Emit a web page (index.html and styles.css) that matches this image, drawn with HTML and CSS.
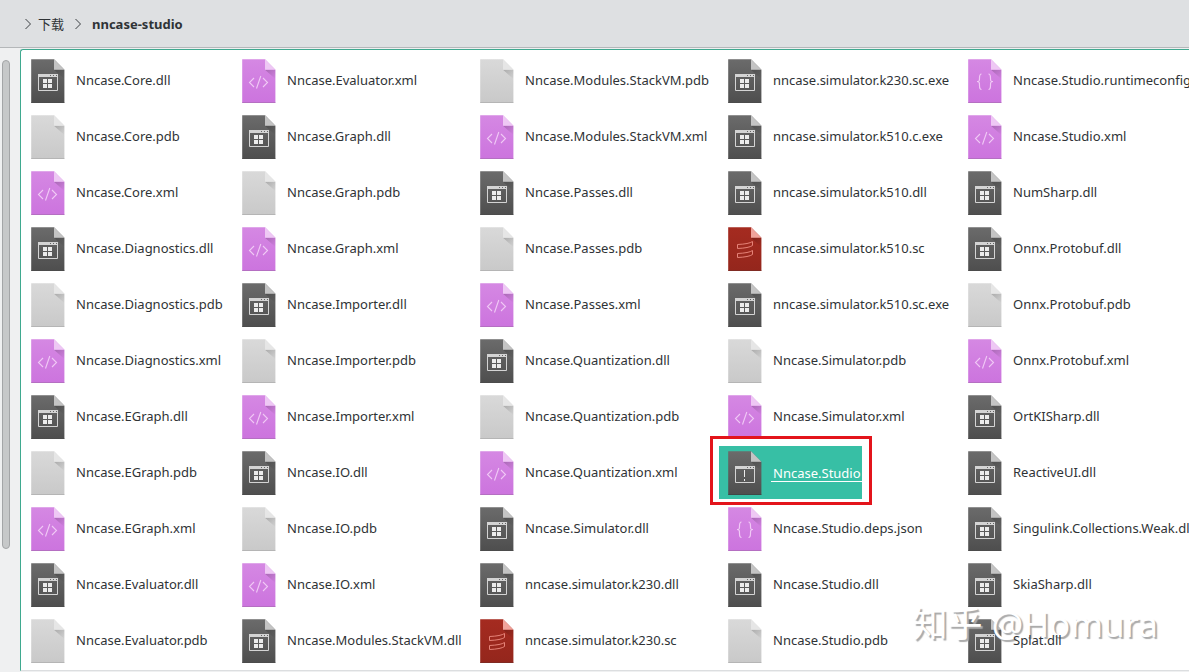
FILE: index.html
```html
<!DOCTYPE html>
<html lang="zh-CN">
<head>
<meta charset="utf-8">
<title>nncase-studio</title>
<link rel="stylesheet" href="styles.css">
</head>
<body>
<svg class="defs" aria-hidden="true">
  <defs>
    <linearGradient id="g-dark" x1="0" y1="0" x2="0" y2="1"><stop offset="0" stop-color="#6b6b6b"/><stop offset="1" stop-color="#4e4e4e"/></linearGradient>
    <linearGradient id="g-grey" x1="0" y1="0" x2="0" y2="1"><stop offset="0" stop-color="#d9d9d9"/><stop offset="1" stop-color="#c9c9c9"/></linearGradient>
    <linearGradient id="g-pink" x1="0" y1="0" x2="0" y2="1"><stop offset="0" stop-color="#d588e3"/><stop offset="1" stop-color="#cc74de"/></linearGradient>
    <linearGradient id="g-red" x1="0" y1="0" x2="0" y2="1"><stop offset="0" stop-color="#a52b20"/><stop offset="1" stop-color="#94261c"/></linearGradient>
    <linearGradient id="g-fold" x1="0" y1="0" x2="1" y2="1"><stop offset="0" stop-color="#000" stop-opacity=".2"/><stop offset="1" stop-color="#000" stop-opacity="0"/></linearGradient>
  </defs>
  <symbol id="window" viewBox="0 0 34 44">
    <path d="M.2 .3H23L33.4 10.800V43.700H.2Z" fill="url(#g-dark)"/><path d="M.2 43H33.400V43.700H.2Z" fill="#3d3d3d"/>
    <path d="M23 10.800H33.400V20Z" fill="url(#g-fold)"/><path d="M23 .3L33.4 10.800H23Z" fill="#c4c4c4"/>
    <path d="M7.500 15.500H26.500V31.500H7.500Z" fill="none" stroke="#d4d4d4"/><path d="M7 15H27V18H7Z" fill="#d4d4d4"/>
    <path d="M19 16h1v1h-1zM22 16h1v1h-1zM25 16h1v1h-1z" fill="#666"/>
  </symbol>
  <symbol id="dll" viewBox="0 0 34 44">
    <use href="#window"/><path d="M12 20h4v4h-4zM17 20h4v4h-4zM12 25h4v4h-4zM17 25h4v4h-4z" fill="#ececec"/>
  </symbol>
  <symbol id="exec" viewBox="0 0 34 44">
    <use href="#window"/><path d="M16 19h1v7h-1zM16 28h1v2h-1z" fill="#ececec"/>
  </symbol>
  <symbol id="pdb" viewBox="0 0 34 44">
    <path d="M.2 .3H23L33.4 10.800V43.700H.2Z" fill="url(#g-grey)"/><path d="M.2 43H33.400V43.700H.2Z" fill="#aaa"/>
    <path d="M23 10.800H33.400V20Z" fill="url(#g-fold)"/><path d="M23 .3L33.4 10.800H23Z" fill="#e6e6e6"/>
  </symbol>
  <symbol id="pink" viewBox="0 0 34 44">
    <path d="M.2 .3H23L33.4 10.800V43.700H.2Z" fill="url(#g-pink)"/><path d="M.2 43H33.400V43.700H.2Z" fill="#a962b6"/>
    <path d="M23 10.800H33.400V20Z" fill="url(#g-fold)"/><path d="M23 .3L33.4 10.800H23Z" fill="#eec8f4"/>
  </symbol>
  <symbol id="xml" viewBox="0 0 34 44">
    <use href="#pink"/><path d="M12 19L7.500 23.500L12 28M21 19L25.500 23.500L21 28M18.800 17L14.500 29.500" fill="none" stroke="#f0c9f5" stroke-width="1.1"/>
  </symbol>
  <symbol id="json" viewBox="0 0 34 44">
    <use href="#pink"/><path d="M13.500 15C11.500 15 11.500 16.500 11.500 19C11.500 21.500 11.500 22.500 9 22.500C11.500 22.500 11.500 24 11.500 26.500C11.500 29 11.500 30.500 13.500 30.500M20.500 15C22.500 15 22.500 16.500 22.500 19C22.500 21.500 22.500 22.500 25 22.500C22.500 22.500 22.500 24 22.500 26.500C22.500 29 22.500 30.500 20.500 30.500" fill="none" stroke="#f0c9f5" stroke-width="1.2"/>
  </symbol>
  <symbol id="sc" viewBox="0 0 34 44">
    <path d="M.2 .3H23L33.4 10.800V43.700H.2Z" fill="url(#g-red)"/><path d="M.2 43H33.400V43.700H.2Z" fill="#701b13"/>
    <path d="M23 10.800H33.400V20Z" fill="url(#g-fold)"/><path d="M23 .3L33.4 10.800H23Z" fill="#f0a39b"/>
    <path d="M9.500 17.500Q21 17 24.500 14.500V18.500Q21 21 9.500 21.500ZM9.500 26.500Q21 26 24.500 23.500V27.500Q21 30 9.500 30.500Z" fill="none" stroke="#e58378"/>
  </symbol>
</svg>

<header class="pathbar">
  <nav class="crumbs" aria-label="路径">
    <svg class="chevron" viewBox="0 0 8 12" aria-hidden="true"><path d="M1.500 1L6.500 6L1.500 11"/></svg>
    <a href="#downloads">下载</a>
    <svg class="chevron" viewBox="0 0 8 12" aria-hidden="true"><path d="M1.500 1L6.500 6L1.500 11"/></svg>
    <a class="current" href="#nncase-studio" aria-current="page">nncase-studio</a>
  </nav>
</header>

<div class="workspace">
  <div class="gutter"><div class="scroll-thumb"></div></div>
  <main class="files">
    <ul class="column">
      <li><a href="#f"><svg><use href="#dll"/></svg><span>Nncase.Core.dll</span></a></li>
      <li><a href="#f"><svg><use href="#pdb"/></svg><span>Nncase.Core.pdb</span></a></li>
      <li><a href="#f"><svg><use href="#xml"/></svg><span>Nncase.Core.xml</span></a></li>
      <li><a href="#f"><svg><use href="#dll"/></svg><span>Nncase.Diagnostics.dll</span></a></li>
      <li><a href="#f"><svg><use href="#pdb"/></svg><span>Nncase.Diagnostics.pdb</span></a></li>
      <li><a href="#f"><svg><use href="#xml"/></svg><span>Nncase.Diagnostics.xml</span></a></li>
      <li><a href="#f"><svg><use href="#dll"/></svg><span>Nncase.EGraph.dll</span></a></li>
      <li><a href="#f"><svg><use href="#pdb"/></svg><span>Nncase.EGraph.pdb</span></a></li>
      <li><a href="#f"><svg><use href="#xml"/></svg><span>Nncase.EGraph.xml</span></a></li>
      <li><a href="#f"><svg><use href="#dll"/></svg><span>Nncase.Evaluator.dll</span></a></li>
      <li><a href="#f"><svg><use href="#pdb"/></svg><span>Nncase.Evaluator.pdb</span></a></li>
    </ul>
    <ul class="column">
      <li><a href="#f"><svg><use href="#xml"/></svg><span>Nncase.Evaluator.xml</span></a></li>
      <li><a href="#f"><svg><use href="#dll"/></svg><span>Nncase.Graph.dll</span></a></li>
      <li><a href="#f"><svg><use href="#pdb"/></svg><span>Nncase.Graph.pdb</span></a></li>
      <li><a href="#f"><svg><use href="#xml"/></svg><span>Nncase.Graph.xml</span></a></li>
      <li><a href="#f"><svg><use href="#dll"/></svg><span>Nncase.Importer.dll</span></a></li>
      <li><a href="#f"><svg><use href="#pdb"/></svg><span>Nncase.Importer.pdb</span></a></li>
      <li><a href="#f"><svg><use href="#xml"/></svg><span>Nncase.Importer.xml</span></a></li>
      <li><a href="#f"><svg><use href="#dll"/></svg><span>Nncase.IO.dll</span></a></li>
      <li><a href="#f"><svg><use href="#pdb"/></svg><span>Nncase.IO.pdb</span></a></li>
      <li><a href="#f"><svg><use href="#xml"/></svg><span>Nncase.IO.xml</span></a></li>
      <li><a href="#f"><svg><use href="#dll"/></svg><span>Nncase.Modules.StackVM.dll</span></a></li>
    </ul>
    <ul class="column">
      <li><a href="#f"><svg><use href="#pdb"/></svg><span>Nncase.Modules.StackVM.pdb</span></a></li>
      <li><a href="#f"><svg><use href="#xml"/></svg><span>Nncase.Modules.StackVM.xml</span></a></li>
      <li><a href="#f"><svg><use href="#dll"/></svg><span>Nncase.Passes.dll</span></a></li>
      <li><a href="#f"><svg><use href="#pdb"/></svg><span>Nncase.Passes.pdb</span></a></li>
      <li><a href="#f"><svg><use href="#xml"/></svg><span>Nncase.Passes.xml</span></a></li>
      <li><a href="#f"><svg><use href="#dll"/></svg><span>Nncase.Quantization.dll</span></a></li>
      <li><a href="#f"><svg><use href="#pdb"/></svg><span>Nncase.Quantization.pdb</span></a></li>
      <li><a href="#f"><svg><use href="#xml"/></svg><span>Nncase.Quantization.xml</span></a></li>
      <li><a href="#f"><svg><use href="#dll"/></svg><span>Nncase.Simulator.dll</span></a></li>
      <li><a href="#f"><svg><use href="#dll"/></svg><span>nncase.simulator.k230.dll</span></a></li>
      <li><a href="#f"><svg><use href="#sc"/></svg><span>nncase.simulator.k230.sc</span></a></li>
    </ul>
    <ul class="column">
      <li><a href="#f"><svg><use href="#dll"/></svg><span>nncase.simulator.k230.sc.exe</span></a></li>
      <li><a href="#f"><svg><use href="#dll"/></svg><span>nncase.simulator.k510.c.exe</span></a></li>
      <li><a href="#f"><svg><use href="#dll"/></svg><span>nncase.simulator.k510.dll</span></a></li>
      <li><a href="#f"><svg><use href="#sc"/></svg><span>nncase.simulator.k510.sc</span></a></li>
      <li><a href="#f"><svg><use href="#dll"/></svg><span>nncase.simulator.k510.sc.exe</span></a></li>
      <li><a href="#f"><svg><use href="#pdb"/></svg><span>Nncase.Simulator.pdb</span></a></li>
      <li><a href="#f"><svg><use href="#xml"/></svg><span>Nncase.Simulator.xml</span></a></li>
      <li class="selected"><a href="#f"><svg><use href="#exec"/></svg><span>Nncase.Studio</span></a></li>
      <li><a href="#f"><svg><use href="#json"/></svg><span>Nncase.Studio.deps.json</span></a></li>
      <li><a href="#f"><svg><use href="#dll"/></svg><span>Nncase.Studio.dll</span></a></li>
      <li><a href="#f"><svg><use href="#pdb"/></svg><span>Nncase.Studio.pdb</span></a></li>
    </ul>
    <ul class="column">
      <li><a href="#f"><svg><use href="#json"/></svg><span>Nncase.Studio.runtimeconfig.json</span></a></li>
      <li><a href="#f"><svg><use href="#xml"/></svg><span>Nncase.Studio.xml</span></a></li>
      <li><a href="#f"><svg><use href="#dll"/></svg><span>NumSharp.dll</span></a></li>
      <li><a href="#f"><svg><use href="#dll"/></svg><span>Onnx.Protobuf.dll</span></a></li>
      <li><a href="#f"><svg><use href="#pdb"/></svg><span>Onnx.Protobuf.pdb</span></a></li>
      <li><a href="#f"><svg><use href="#xml"/></svg><span>Onnx.Protobuf.xml</span></a></li>
      <li><a href="#f"><svg><use href="#dll"/></svg><span>OrtKISharp.dll</span></a></li>
      <li><a href="#f"><svg><use href="#dll"/></svg><span>ReactiveUI.dll</span></a></li>
      <li><a href="#f"><svg><use href="#dll"/></svg><span>Singulink.Collections.Weak.dll</span></a></li>
      <li><a href="#f"><svg><use href="#dll"/></svg><span>SkiaSharp.dll</span></a></li>
      <li><a href="#f"><svg><use href="#dll"/></svg><span>Splat.dll</span></a></li>
    </ul>
    <div class="watermark">知乎 @Homura</div>
  </main>
</div>
</body>
</html>
```
FILE: styles.css
```css
*, *::after { box-sizing: border-box; }
body {
  margin: 0;
  height: 100vh;
  display: flex;
  flex-direction: column;
  overflow: hidden;
  background: #eff0f1;
  color: #2f3336;
  font: 13px/20px "Noto Sans", "Noto Sans CJK SC", sans-serif;
}
a { color: inherit; text-decoration: none; }
.defs { position: absolute; width: 0; height: 0; }

.pathbar {
  flex: none;
  height: 48px;
  padding-left: 24px;
  display: flex;
  align-items: center;
  background: #dee0e2;
  border-bottom: 1px solid #b4b7b9;
}
.crumbs { display: flex; align-items: center; gap: 6px; }
.crumbs a + .chevron { margin-left: 4px; }
.crumbs .current { margin-left: 4px; font-weight: 700; }
.chevron { width: 8px; height: 12px; fill: none; stroke: #3c4043; }

.workspace { flex: 1; min-height: 0; display: flex; padding: 1px 0; }
.gutter { width: 20px; flex: none; padding: 11px 0 0 2px; }
.scroll-thumb {
  width: 8px;
  height: 489px;
  background: #c6c8c9;
  border: 1px solid #a3a5a7;
  border-radius: 4px;
}
.files {
  position: relative;
  flex: 1;
  min-width: 0;
  display: grid;
  grid-template-columns: 211px 238px 248px 240px 1fr;
  align-content: start;
  padding: 3px 0 0 10px;
  overflow: hidden;
  background: #fff;
  border-top: 1px solid #3fa98f;
  border-left: 1px solid #3fa98f;
  border-bottom: 1px solid #dcdee0;
  border-radius: 3px 0 0 0;
}
.column { margin: 0; padding: 0; list-style: none; min-width: 0; }
.column li { display: flex; height: 56px; }
.column a { display: flex; align-items: center; gap: 11px; white-space: nowrap; }
.column svg { width: 34px; height: 44px; flex: none; }
.column span { position: relative; z-index: 1; padding-bottom: 2px; }

.column .selected { position: relative; }
.selected a {
  height: 53px;
  margin: 1px 0 0 -9px;
  padding: 1px 0 0 9px;
  background: #37bfa5;
  color: #fff;
}
.column .selected span {
  margin-left: -2px;
  padding: 0 1px 0 2px;
  line-height: 16px;
  border-bottom: 1px solid #fff;
}
.selected::after {
  content: "";
  position: absolute;
  left: -18px;
  top: -9px;
  width: 162px;
  height: 69px;
  border: 3px solid #e3141b;
}

.watermark {
  position: absolute;
  right: 31px;
  bottom: 22px;
  color: #fff;
  font: 35px/48px "Noto Sans", "Noto Sans CJK SC", sans-serif;
  text-shadow: 2px 2px 1px #aaa;
  pointer-events: none;
}
```
